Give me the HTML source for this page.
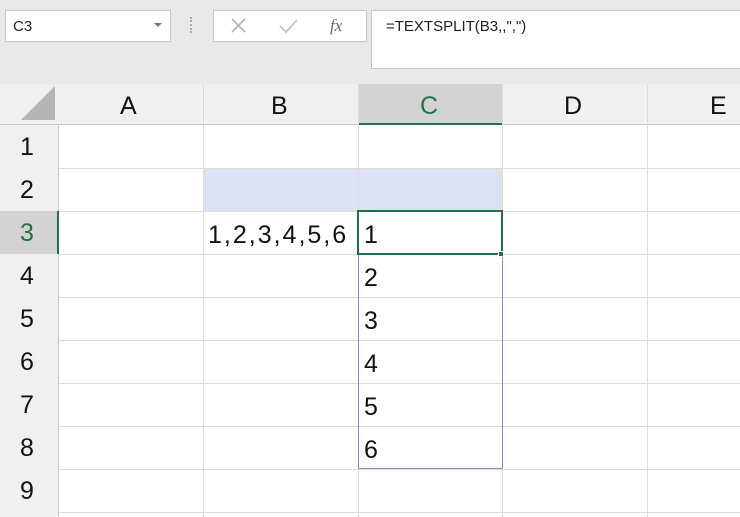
<!DOCTYPE html>
<html><head><style>
body{margin:0;width:740px;height:517px;overflow:hidden;background:#fff;font-family:"Liberation Sans",sans-serif;position:relative}
.a{position:absolute;box-sizing:border-box}
.t{font-size:25px;color:#111}
</style></head><body>
<div class="a" style="left:0;top:0;width:740px;height:84px;background:#e9e9e9"></div>
<div class="a" style="left:5px;top:10px;width:166px;height:32px;background:#fff;border:1px solid #c8c8c8;font-size:15px;padding:7px 0 0 7px;color:#222">C3</div>
<div class="a" style="left:154px;top:23px;border-left:4px solid transparent;border-right:4px solid transparent;border-top:4px solid #777"></div>
<div class="a" style="left:190px;top:17px;width:2px;height:16px;border-left:2px dotted #aaa"></div>
<div class="a" style="left:213px;top:10px;width:154px;height:32px;background:#fff;border:1px solid #c8c8c8"></div>
<svg class="a" style="left:228px;top:16px" width="130" height="20"><path d="M4 3L17 16M17 3L4 16" stroke="#b5b5b5" stroke-width="1.6"/><path d="M52 10l6 6l11-12" stroke="#c8c8c8" stroke-width="2" fill="none"/><text x="102" y="15" font-family="Liberation Serif" font-style="italic" font-size="17" fill="#666">fx</text></svg>
<div class="a" style="left:371px;top:10px;width:370px;height:59px;background:#fff;border:1px solid #c8c8c8;font-size:15px;padding:7px 0 0 14px;color:#222">=TEXTSPLIT(B3,,",")</div>
<div class="a" style="left:0;top:84px;width:740px;height:41px;background:#f0f0f0;border-bottom:1px solid #c6c6c6"></div>
<svg class="a" style="left:20px;top:86px" width="36" height="36"><path d="M35 0V34H1Z" fill="#b4b4b4"/></svg>
<div class="a" style="left:358px;top:84px;width:144px;height:41px;background:#d3d3d3;border-bottom:2px solid #217346"></div>
<div class="a" style="left:0;top:125px;width:59px;height:392px;background:#f0f0f0;border-right:1px solid #c6c6c6"></div>
<div class="a" style="left:0;top:211px;width:59px;height:43px;background:#d3d3d3;border-right:2px solid #217346"></div>
<div class="a" style="left:203px;top:168px;width:299px;height:43px;background:#dce2f1"></div>
<svg class="a" style="left:0;top:84px" width="740" height="433">
<g stroke="#dcdcdc" stroke-width="1">
<path d="M203.5 0V433M358.5 0V433M502.5 0V433M647.5 0V433"/>
<path d="M59 84.5H740M59 127.5H740M59 170.5H740M59 213.5H740M59 256.5H740M59 299.5H740M59 342.5H740M59 385.5H740M59 428.5H740"/>
</g>
</svg>
<div class="a" style="left:358px;top:211px;width:145px;height:258px;border:1px solid #7b96c4"></div>
<div class="a" style="left:357px;top:210px;width:146px;height:45px;border:2px solid #217346"></div>
<div class="a" style="left:498px;top:251px;width:6px;height:6px;background:#217346;border:1px solid #fff"></div>
<div class="a t" style="left:120px;top:92px">A</div>
<div class="a t" style="left:271px;top:92px">B</div>
<div class="a t" style="left:420px;top:92px;color:#217346">C</div>
<div class="a t" style="left:564px;top:92px">D</div>
<div class="a t" style="left:710px;top:92px">E</div>
<div class="a t" style="left:20px;top:133px">1</div>
<div class="a t" style="left:20px;top:176px">2</div>
<div class="a t" style="left:20px;top:219px;color:#217346">3</div>
<div class="a t" style="left:20px;top:262px">4</div>
<div class="a t" style="left:20px;top:305px">5</div>
<div class="a t" style="left:20px;top:348px">6</div>
<div class="a t" style="left:20px;top:391px">7</div>
<div class="a t" style="left:20px;top:434px">8</div>
<div class="a t" style="left:20px;top:477px">9</div>
<div class="a t" style="left:208px;top:221px;letter-spacing:2px">1,2,3,4,5,6</div>
<div class="a t" style="left:364px;top:221px">1</div>
<div class="a t" style="left:364px;top:264px">2</div>
<div class="a t" style="left:364px;top:307px">3</div>
<div class="a t" style="left:364px;top:350px">4</div>
<div class="a t" style="left:364px;top:393px">5</div>
<div class="a t" style="left:364px;top:436px">6</div>
</body></html>
